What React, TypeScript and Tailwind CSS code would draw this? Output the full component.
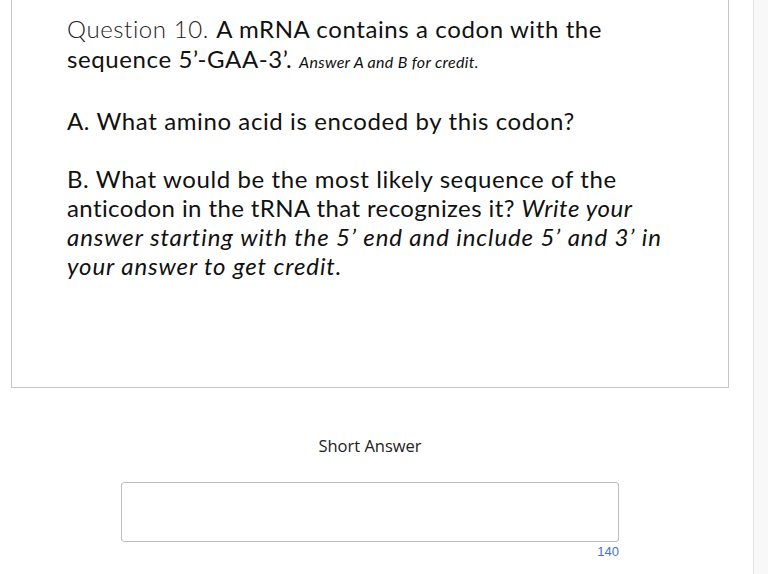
export default function App() {
  return (
    <div className="flex h-[574px] w-[768px] overflow-hidden bg-white">
      <div className="w-[753px] shrink-0">
        {/* question card */}
        <div className="ml-[11px] h-[388px] w-[718px] border-x border-b border-[#c8c8c8] pl-[55px] pr-[20px] pt-[14px] text-[#111] font-['Lato',sans-serif] whitespace-nowrap">
          <p className="text-[24px] leading-[30px] tracking-[0.6px]">
            <span className="font-light text-[#222]">Question 10. </span>A mRNA contains a codon with the
            <br />
            sequence 5’-GAA-3’.{' '}
            <span className="text-[16px] italic tracking-[0.3px]">Answer A and B for credit.</span>
          </p>
          <p className="mt-[29px] text-[24px] leading-[29px] tracking-[0.6px]">A. What amino acid is encoded by this codon?</p>
          <p className="mt-[29px] text-[24px] leading-[29px] tracking-[0.6px]">
            B. What would be the most likely sequence of the
            <br />
            <span className="tracking-[0.4px]">anticodon in the tRNA that recognizes it?</span> <i>Write your</i>
            <br />
            <i className="tracking-[0.9px]">answer starting with the 5’ end and include 5’ and 3’ in</i>
            <br />
            <i className="tracking-[0.9px]">your answer to get credit.</i>
          </p>
        </div>

        {/* answer field */}
        <div className="ml-[121px] w-[498px] pt-[47px] font-['Open_Sans',sans-serif]">
          <div className="text-center text-[16.5px] leading-[22px] text-[#222]">Short Answer</div>
          <div className="mt-[25px] h-[60px] rounded-[3px] border border-[#bdbdbd] bg-white"></div>
          <div className="mt-[2px] text-right text-[13px] leading-[16px] text-[#4274cc] font-['Liberation_Sans',sans-serif]">140</div>
        </div>
      </div>
      {/* scrollbar track */}
      <div className="w-[15px] shrink-0 border-l border-[#e3e3e3] bg-[#f8f8f8]"></div>
    </div>
  )
}
